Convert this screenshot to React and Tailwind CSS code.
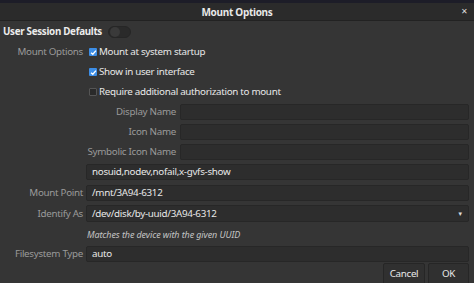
import React from "react";

function Check({ checked }) {
  return checked ? (
    <span className="w-[8px] h-[8px] rounded-[1px] bg-[#3d8ee6] flex items-center justify-center">
      <svg width="7" height="7" viewBox="0 0 8 8">
        <path d="M1.2 4.2 L3.2 6 L6.8 1.8" fill="none" stroke="white" strokeWidth="1.5" />
      </svg>
    </span>
  ) : (
    <span className="w-[8px] h-[8px] rounded-[1px] bg-[#2a2a2a] border border-[#555]" />
  );
}

function Entry({ children, className = "" }) {
  return (
    <div className={"h-[16px] bg-[#2d2d2d] border border-[#272727] rounded-[2px] flex items-center px-[5px] text-[#e8e8e8] " + className}>
      {children}
    </div>
  );
}

export default function App() {
  return (
    <div className="w-[474px] h-[283px] overflow-hidden bg-[#353535] text-[9.8px] leading-none tracking-[-0.3px]" style={{ fontFamily: '"Noto Sans", sans-serif' }}>
      <div className="h-[3px] bg-[#1d1d28]" />
      <div className="h-[18px] bg-[#2b2b2b] border-b border-[#222] flex items-center justify-center relative">
        <span className="font-bold text-[#e8e8e8] text-[10px]">Mount Options</span>
        <span className="absolute right-[6px] top-[4px] text-[#ddd] text-[8px]">✕</span>
      </div>
      <div className="flex items-center gap-[6px] pl-[3px] h-[21px]">
        <span className="font-bold text-[#ececec]">User Session Defaults</span>
        <span className="w-[23px] h-[12px] rounded-full bg-[#2a2a2a] border border-[#262626] flex items-center pl-[1px]">
          <span className="w-[10px] h-[10px] rounded-full bg-[#3a3a3a]" />
        </span>
      </div>
      <div className="grid grid-cols-[83px_1fr] gap-x-[3px] pr-[5px] text-[#9a9a9a]">
        <div className="text-right h-[20px] flex items-center justify-end">Mount Options</div>
        <div className="flex items-center gap-[2px] h-[20px] text-[#e8e8e8] pl-[3px]"><Check checked />Mount at system startup</div>
        <div />
        <div className="flex items-center gap-[2px] h-[20px] text-[#e8e8e8] pl-[3px]"><Check checked />Show in user interface</div>
        <div />
        <div className="flex items-center gap-[2px] h-[20px] text-[#e8e8e8] pl-[3px]"><Check />Require additional authorization to mount</div>
        <div />
        <div className="grid grid-cols-[90px_1fr] gap-x-[4px] gap-y-[4px] pt-[2px] pb-[2px]">
          <div className="text-right flex items-center justify-end h-[16px]">Display Name</div>
          <Entry />
          <div className="text-right flex items-center justify-end h-[16px]">Icon Name</div>
          <Entry />
          <div className="text-right flex items-center justify-end h-[16px] whitespace-nowrap">Symbolic Icon Name</div>
          <Entry />
          <Entry className="col-span-2">nosuid,nodev,nofail,x-gvfs-show</Entry>
        </div>
        <div className="text-right h-[21px] flex items-center justify-end">Mount Point</div>
        <div className="flex items-center h-[21px]"><Entry className="w-full">/mnt/3A94-6312</Entry></div>
        <div className="text-right h-[21px] flex items-center justify-end">Identify As</div>
        <div className="flex items-center h-[21px]">
          <Entry className="w-full justify-between h-[17px]">
            <span>/dev/disk/by-uuid/3A94-6312</span>
            <span className="text-[6px] text-[#ddd]">▼</span>
          </Entry>
        </div>
        <div />
        <div className="h-[21px] flex items-center pl-[1px] italic text-[#c4c4c4] text-[9px] tracking-[-0.1px]">Matches the device with the given UUID</div>
        <div className="text-right h-[18px] flex items-center justify-end">Filesystem Type</div>
        <div className="flex items-center h-[18px]"><Entry className="w-full">auto</Entry></div>
      </div>
      <div className="flex justify-end gap-[3px] pr-[5px]">
        <div className="w-[42px] h-[22px] bg-[#303030] border border-[#262626] rounded-[2px] flex items-center justify-center text-[#e8e8e8]">Cancel</div>
        <div className="w-[41px] h-[22px] bg-[#303030] border border-[#262626] rounded-[2px] flex items-center justify-center text-[#e8e8e8]">OK</div>
      </div>
    </div>
  );
}
